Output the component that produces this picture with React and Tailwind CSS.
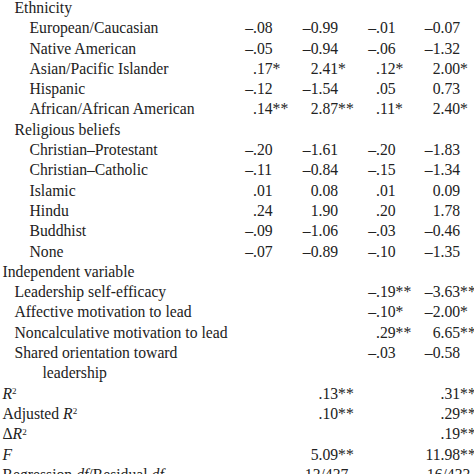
import React from "react";

const D = "–";

const rows = [
  { l: 1, t: "Ethnicity" },
  { l: 2, t: "European/Caucasian", v: [D + ".08", D + "0.99", D + ".01", D + "0.07"] },
  { l: 2, t: "Native American", v: [D + ".05", D + "0.94", D + ".06", D + "1.32"] },
  { l: 2, t: "Asian/Pacific Islander", v: [".17*", "2.41*", ".12*", "2.00*"] },
  { l: 2, t: "Hispanic", v: [D + ".12", D + "1.54", ".05", "0.73"] },
  { l: 2, t: "African/African American", v: [".14**", "2.87**", ".11*", "2.40*"] },
  { l: 1, t: "Religious beliefs" },
  { l: 2, t: "Christian–Protestant", v: [D + ".20", D + "1.61", D + ".20", D + "1.83"] },
  { l: 2, t: "Christian–Catholic", v: [D + ".11", D + "0.84", D + ".15", D + "1.34"] },
  { l: 2, t: "Islamic", v: [".01", "0.08", ".01", "0.09"] },
  { l: 2, t: "Hindu", v: [".24", "1.90", ".20", "1.78"] },
  { l: 2, t: "Buddhist", v: [D + ".09", D + "1.06", D + ".03", D + "0.46"] },
  { l: 2, t: "None", v: [D + ".07", D + "0.89", D + ".10", D + "1.35"] },
  { l: 0, t: "Independent variable" },
  { l: 1, t: "Leadership self-efficacy", v: ["", "", D + ".19**", D + "3.63**"] },
  { l: 1, t: "Affective motivation to lead", v: ["", "", D + ".10*", D + "2.00*"] },
  { l: 1, t: "Noncalculative motivation to lead", v: ["", "", ".29**", "6.65**"] },
  { l: 1, t: "Shared orientation toward", wrap: "leadership", v: ["", "", D + ".03", D + "0.58"] },
  { l: 0, t: "R2", v: ["", ".13**", "", ".31**"] },
  { l: 0, t: "AdjR2", v: ["", ".10**", "", ".29**"] },
  { l: 0, t: "DR2", v: ["", "", "", ".19**"] },
  { l: 0, t: "F", v: ["", "5.09**", "", "11.98**"] },
  { l: 0, t: "DF", v: ["", "13/437", "", "16/433"], frac: true },
];

const colW = ["w-[56px]", "w-[62px]", "w-[60px]", "w-[56px]"];
const leftW = ["w-[13px]", "w-[22.5px]", "w-[18px]", "w-[22.5px]"];
const leftWFrac = ["w-[13px]", "w-[24.5px]", "w-[18px]", "w-[24.5px]"];

function R2() {
  return (
    <>
      <span className="italic">R</span>
      <sup className="text-[9px]">2</sup>
    </>
  );
}

function Label({ row }) {
  if (row.t === "R2") return <R2 />;
  if (row.t === "AdjR2")
    return (
      <>
        Adjusted <R2 />
      </>
    );
  if (row.t === "DR2")
    return (
      <>
        Δ<R2 />
      </>
    );
  if (row.t === "F") return <span className="italic">F</span>;
  if (row.t === "DF")
    return (
      <>
        Regression <span className="italic">df</span>/Residual <span className="italic">df</span>
      </>
    );
  return row.t;
}

function Num({ s, i, frac }) {
  if (!s) return <div className={colW[i] + " shrink-0"} />;
  const idx = s.search(/[./]/);
  const left = idx >= 0 ? s.slice(0, idx) : s;
  const right = idx >= 0 ? s.slice(idx) : "";
  return (
    <div className={colW[i] + " shrink-0 flex whitespace-nowrap"}>
      <span className={(frac ? leftWFrac[i] : leftW[i]) + " shrink-0 text-right"}>{left}</span>
      <span>{right}</span>
    </div>
  );
}

const pads = ["pl-[2.5px]", "pl-[14.5px]", "pl-[29.5px]"];

export default function App() {
  return (
    <div
      className="w-[474px] h-[474px] overflow-hidden bg-white text-[#222] text-[15.7px] leading-[20.3px]"
      style={{ fontFamily: '"Liberation Serif", "Times New Roman", serif' }}
    >
      <div className="-mt-[2px] flex flex-col">
        {rows.map((row, k) => (
          <div key={k} className="flex">
            <div className={"w-[240px] shrink-0 whitespace-nowrap " + pads[row.l]}>
              <div>
                <Label row={row} />
              </div>
              {row.wrap && <div className="pl-[28px]">{row.wrap}</div>}
            </div>
            {row.v &&
              row.v.map((s, i) => <Num key={i} s={s} i={i} frac={row.frac} />)}
          </div>
        ))}
      </div>
    </div>
  );
}
